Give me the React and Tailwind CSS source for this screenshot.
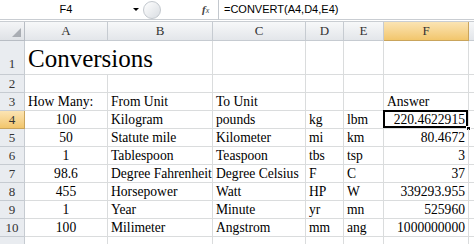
import React from "react";

const cols = ["A", "B", "C", "D", "E", "F"];

const rows = [
  ["", "", "", "", "", ""],
  ["How Many:", "From Unit", "To Unit", "", "", "Answer"],
  ["100", "Kilogram", "pounds", "kg", "lbm", "220.4622915"],
  ["50", "Statute mile", "Kilometer", "mi", "km", "80.4672"],
  ["1", "Tablespoon", "Teaspoon", "tbs", "tsp", "3"],
  ["98.6", "Degree Fahrenheit", "Degree Celsius", "F", "C", "37"],
  ["455", "Horsepower", "Watt", "HP", "W", "339293.955"],
  ["1", "Year", "Minute", "yr", "mn", "525960"],
  ["100", "Milimeter", "Angstrom", "mm", "ang", "1000000000"],
];

const serif = { fontFamily: '"Liberation Serif", "Times New Roman", serif' };

function Cell({ children, align = "left", selected }) {
  const a =
    align === "center" ? "justify-center" : align === "right" ? "justify-end" : "justify-start";
  return (
    <div
      className={`relative h-[18px] border-r border-b border-[#dadcdd] flex items-end ${a} px-[3px] text-[13.6px] leading-[17px] text-black whitespace-nowrap overflow-visible`}
    >
      {selected && (
        <>
          <div className="absolute -left-[1px] -top-[1px] right-0 bottom-0 border-2 border-black pointer-events-none" />
          <div className="absolute -right-[3px] -bottom-[3px] w-[5px] h-[5px] bg-black border border-white" />
        </>
      )}
      <span className="relative">{children}</span>
    </div>
  );
}

export default function App() {
  return (
    <div className="w-[474px] h-[244px] overflow-hidden bg-white">
      {/* formula bar */}
      <div
        className="h-[22px] flex items-center border-b-[3px] border-double border-[#c9cdd2] text-[11px] text-black"
        style={{ fontFamily: '"Liberation Sans", Arial, sans-serif' }}
      >
        <div className="w-[130px] text-center pl-[2px]">F4</div>
        <div className="w-[12px] flex justify-center">
          <span className="block w-0 h-0 border-l-[3px] border-r-[3px] border-t-[3px] border-l-transparent border-r-transparent border-t-black" />
        </div>
        <div className="w-[18px] h-[18px] rounded-full bg-gradient-to-br from-[#ffffff] to-[#d9dde2] border border-[#c3c8ce] ml-[1px]" />
        <div className="flex-1" />
        <div className="w-[16px] italic text-[11px] text-[#444]" style={serif}>
          <span className="font-bold">f</span>
          <span className="text-[8px]">x</span>
        </div>
        <div className="w-px h-[20px] bg-[#c3c8ce] mr-[5px]" />
        <div className="w-[250px]">=CONVERT(A4,D4,E4)</div>
      </div>

      <div
        className="grid grid-cols-[25px_83px_105px_93px_38px_40px_85px_1fr]"
        style={serif}
      >
        {/* column headers */}
        <div className="h-[19px] border-r border-b border-[#b8bdc4] bg-gradient-to-b from-[#f4f5f7] to-[#dfe2e6] flex items-end justify-end p-[3px]">
          <span className="block w-0 h-0 border-l-[9px] border-l-transparent border-b-[9px] border-b-[#a9adb3]" />
        </div>
        {cols.map((c) => (
          <div
            key={c}
            className={`h-[19px] border-r border-b flex items-center justify-center text-[13px] ${
              c === "F"
                ? "bg-gradient-to-b from-[#fbe4b3] to-[#f2c66c] border-[#c9a45c] text-[#333]"
                : "bg-gradient-to-b from-[#f7f8f9] to-[#e3e6ea] border-[#c6cbd1] text-[#333]"
            }`}
          >
            {c}
          </div>
        ))}
        <div className="h-[19px] border-b border-[#c6cbd1] bg-gradient-to-b from-[#f7f8f9] to-[#e3e6ea]" />

        {/* row 1 */}
        <div className="h-[34px] border-r border-b border-[#c6cbd1] bg-[#e9ecf0] flex items-end justify-center pb-[1px] text-[13px] text-[#333]">
          1
        </div>
        <div className="h-[34px] border-b border-[#dadcdd] flex items-end px-[3px] text-[25px] leading-[30px] whitespace-nowrap overflow-visible text-black">
          Conversions
        </div>
        <div className="h-[34px] border-r border-b border-[#dadcdd]" />
        <div className="h-[34px] border-r border-b border-[#dadcdd]" />
        <div className="h-[34px] border-r border-b border-[#dadcdd]" />
        <div className="h-[34px] border-r border-b border-[#dadcdd]" />
        <div className="h-[34px] border-r border-b border-[#dadcdd]" />
        <div className="h-[34px] border-b border-[#dadcdd]" />

        {rows.map((r, i) => {
          const n = i + 2;
          const active = n === 4;
          return (
            <React.Fragment key={n}>
              <div
                className={`h-[18px] border-r border-b flex items-end justify-center text-[13px] leading-[16px] text-[#333] ${
                  active
                    ? "bg-gradient-to-b from-[#fbe4b3] to-[#f2c66c] border-[#c9a45c]"
                    : "bg-[#e9ecf0] border-[#c6cbd1]"
                }`}
              >
                {n}
              </div>
              {r.map((v, j) => (
                <Cell
                  key={j}
                  align={j === 0 && n > 3 ? "center" : j === 5 && n > 3 ? "right" : "left"}
                  selected={active && j === 5}
                >
                  {v}
                </Cell>
              ))}
              <div className="h-[18px] border-b border-[#dadcdd]" />
            </React.Fragment>
          );
        })}

        <div className="h-[18px] border-r border-[#c6cbd1] bg-[#e9ecf0]" />
        <div className="h-[18px] border-r border-[#dadcdd]" />
        <div className="h-[18px] border-r border-[#dadcdd]" />
        <div className="h-[18px] border-r border-[#dadcdd]" />
        <div className="h-[18px] border-r border-[#dadcdd]" />
        <div className="h-[18px] border-r border-[#dadcdd]" />
        <div className="h-[18px] border-r border-[#dadcdd]" />
        <div className="h-[18px]" />
      </div>
    </div>
  );
}
